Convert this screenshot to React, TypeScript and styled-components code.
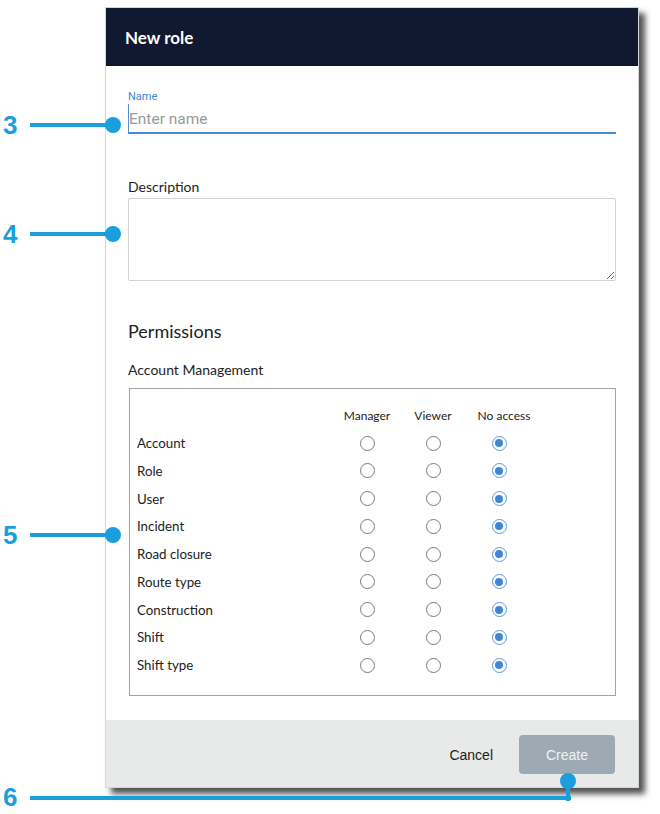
import styled, { createGlobalStyle } from "styled-components";

const rows = [
  "Account",
  "Role",
  "User",
  "Incident",
  "Road closure",
  "Route type",
  "Construction",
  "Shift",
  "Shift type",
];

const levels = ["Manager", "Viewer", "No access"];

const callouts = [
  { num: "3", y: 125 },
  { num: "4", y: 234 },
  { num: "5", y: 535 },
];

export default function App() {
  return (
    <Page>
      <GlobalStyle />
      <Dialog>
        <Header>New role</Header>
        <Body>
          <FloatLabel>Name</FloatLabel>
          <NameInput placeholder="Enter name" />
          <FieldLabel>Description</FieldLabel>
          <TextArea />
          <SectionTitle>Permissions</SectionTitle>
          <FieldLabel $top={20}>Account Management</FieldLabel>
          <Table>
            <Grid>
              <span />
              {levels.map((l, i) => (
                <ColHead key={l} $shift={i === 2 ? 10 : 0}>
                  {l}
                </ColHead>
              ))}
              {rows.map((r) => (
                <Row key={r}>
                  <RowLabel>{r}</RowLabel>
                  {levels.map((l, i) => (
                    <Cell key={l}>
                      <Radio $checked={i === 2} />
                    </Cell>
                  ))}
                </Row>
              ))}
            </Grid>
          </Table>
        </Body>
        <Footer>
          <CancelButton>Cancel</CancelButton>
          <CreateButton>Create</CreateButton>
        </Footer>
      </Dialog>

      {callouts.map((c) => (
        <Callout key={c.num} style={{ top: c.y - 14 }}>
          <Num>{c.num}</Num>
          <Leader />
          <Dot />
        </Callout>
      ))}

      <BottomCallout>
        <Num>6</Num>
        <BottomLeader />
        <Riser />
        <RiserDot />
      </BottomCallout>
    </Page>
  );
}

const GlobalStyle = createGlobalStyle`
  html, body {
    margin: 0;
    padding: 0;
    background: #ffffff;
  }
  * {
    box-sizing: border-box;
  }
`;

const blue = "#1a9fdc";

const Page = styled.div`
  position: relative;
  width: 660px;
  height: 814px;
  padding: 7px 0 0 105px;
  font-family: Lato, "Open Sans", sans-serif;
  color: #222;
`;

const Dialog = styled.div`
  width: 534px;
  background: #fff;
  border: 1px solid #d6d6d6;
  box-shadow: 6px 6px 6px rgba(0, 0, 0, 0.68);
`;

const Header = styled.div`
  height: 58px;
  background: #111930;
  color: #fff;
  display: flex;
  align-items: center;
  padding-left: 19px;
  font-size: 17px;
  font-weight: 700;
`;

const Body = styled.div`
  display: flex;
  flex-direction: column;
  padding: 24px 22px 24px 22px;
`;

const FloatLabel = styled.label`
  font-size: 11px;
  line-height: 14px;
  color: #3c84d4;
  font-family: Roboto, Lato, sans-serif;
`;

const NameInput = styled.input`
  height: 30px;
  padding: 1px 0 0 1px;
  border: none;
  border-bottom: 2px solid #4a8bd6;
  font-family: Roboto, sans-serif;
  font-size: 15.5px;
  outline: none;
  box-shadow: inset 1px 0 0 #5a8fd0;
  &::placeholder {
    color: #9a9a9a;
  }
`;

const FieldLabel = styled.div<{ $top?: number }>`
  margin-top: ${(p) => p.$top ?? 45}px;
  font-size: 14px;
  line-height: 16px;
  color: #222;
`;

const TextArea = styled.textarea`
  margin-top: 3px;
  height: 83px;
  border: 1px solid #d2d2d2;
  border-radius: 2px;
  resize: vertical;
  font-family: Lato, sans-serif;
`;

const SectionTitle = styled.div`
  margin-top: 39px;
  font-size: 18px;
  line-height: 22px;
  color: #1e1e1e;
`;

const Table = styled.div`
  margin: 10px 0 0 1px;
  border: 1px solid #a3a3a3;
  padding: 12.5px 0 16px 7px;
`;

const Grid = styled.div`
  display: grid;
  grid-template-columns: 197px 66px 66px 66px;
  grid-auto-rows: 27.75px;
  align-items: center;
`;

const Row = styled.div`
  display: contents;
`;

const ColHead = styled.div<{ $shift: number }>`
  font-size: 12px;
  text-align: center;
  padding-left: ${(p) => p.$shift}px;
  white-space: nowrap;
  color: #222;
`;

const RowLabel = styled.div`
  font-size: 13.3px;
  color: #222;
`;

const Cell = styled.div`
  display: flex;
  justify-content: center;
`;

const Radio = styled.span<{ $checked: boolean }>`
  width: 15px;
  height: 15px;
  border-radius: 50%;
  border: 1px solid ${(p) => (p.$checked ? "#5b9ae0" : "#7a7a7a")};
  display: flex;
  align-items: center;
  justify-content: center;
  &::after {
    content: "";
    width: 8px;
    height: 8px;
    border-radius: 50%;
    background: #3f87d3;
    display: ${(p) => (p.$checked ? "block" : "none")};
  }
`;

const Footer = styled.div`
  height: 67px;
  background: #e8e9e9;
  display: flex;
  align-items: center;
  justify-content: flex-end;
  padding: 2px 23px 0 0;
  gap: 26px;
`;

const CancelButton = styled.button`
  background: none;
  border: none;
  padding: 0;
  font-family: "Liberation Sans", Arial, sans-serif;
  font-size: 14px;
  color: #1c1c1c;
`;

const CreateButton = styled.button`
  width: 96px;
  height: 39px;
  border: none;
  border-radius: 4px;
  background: #9eaab3;
  color: #eef2f5;
  font-family: "Liberation Sans", Arial, sans-serif;
  font-size: 14px;
`;

const Callout = styled.div`
  position: absolute;
  left: 3px;
  height: 28px;
  display: flex;
  align-items: center;
`;

const Num = styled.span`
  width: 18px;
  font-family: "Liberation Sans", Arial, sans-serif;
  font-weight: 700;
  font-size: 26px;
  color: ${blue};
  line-height: 28px;
`;

const Leader = styled.span`
  width: 78px;
  height: 4px;
  margin-left: 9px;
  background: ${blue};
`;

const Dot = styled.span`
  width: 16px;
  height: 16px;
  border-radius: 50%;
  margin-left: -3px;
  background: ${blue};
`;

const BottomCallout = styled.div`
  position: absolute;
  left: 3px;
  top: 783px;
  width: 580px;
  height: 28px;
  display: flex;
  align-items: center;
`;

const BottomLeader = styled.span`
  width: 541px;
  height: 4px;
  margin-left: 9px;
  margin-top: 2px;
  background: ${blue};
`;

const Riser = styled.span`
  position: absolute;
  left: 563px;
  top: -2px;
  width: 4px;
  height: 20px;
  background: ${blue};
`;

const RiserDot = styled.span`
  position: absolute;
  left: 557px;
  top: -10px;
  width: 16px;
  height: 16px;
  border-radius: 50%;
  background: ${blue};
`;
